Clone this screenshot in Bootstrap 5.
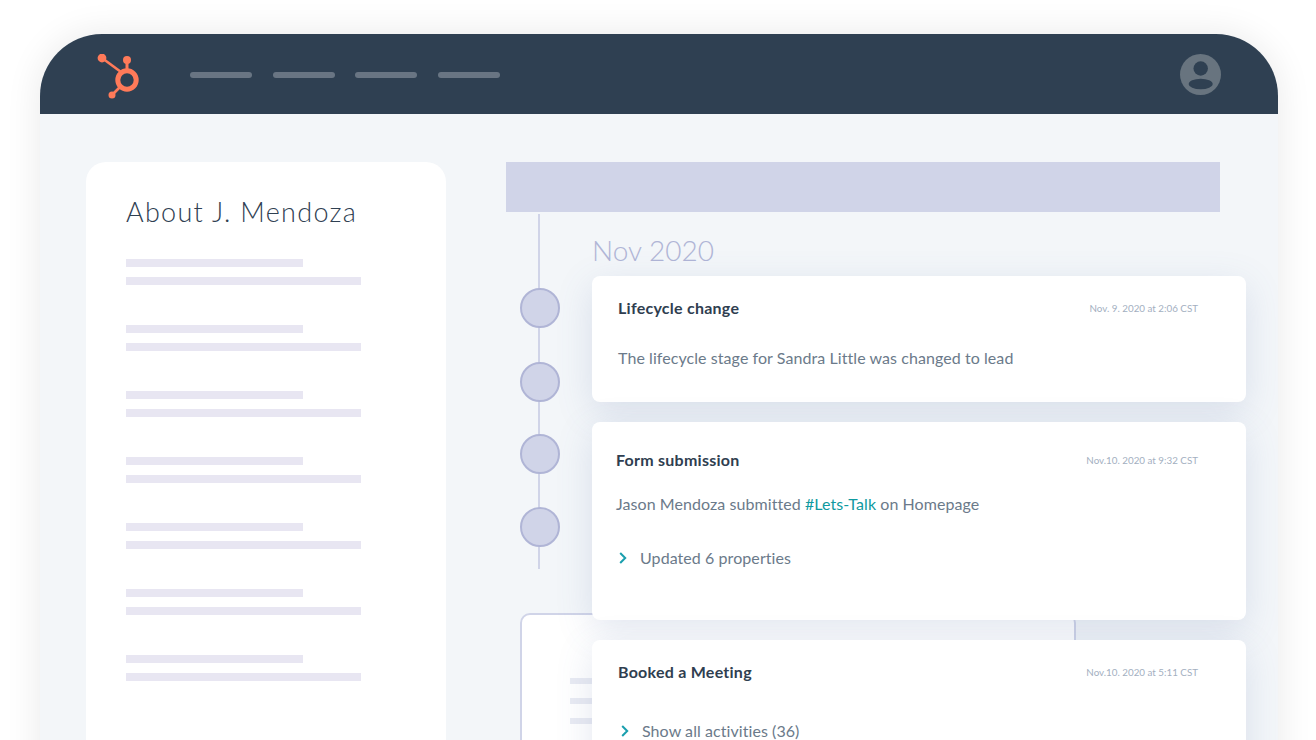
<!DOCTYPE html>
<html lang="en">
<head>
  <meta charset="UTF-8">
  <title>About J. Mendoza</title>
  <meta name="viewport" content="width=device-width, initial-scale=1.0">
  <link rel="stylesheet" href="https://cdn.jsdelivr.net/npm/bootstrap@5.3.0/dist/css/bootstrap.min.css">
  <style>
    html, body {
      height: 740px;
      overflow: hidden;
      background-color: #fff;
      font-family: "Lato", "Liberation Sans", sans-serif;
    }
    .app-window {
      margin: 34px 38px 0 40px;
      height: 780px;
      border-radius: 62px 62px 0 0;
      background-color: #f3f6f9;
      box-shadow: 0 0 36px rgba(0,0,0,.09);
      overflow: hidden;
    }
    .top-bar {
      height: 80px;
      padding: 0 57px 0 56px;
      background-color: #2f4052;
    }
    .top-logo { width: 46px; height: 48px; margin-right: 48px; margin-top: 8px; }
    .top-link {
      width: 62px;
      height: 6px;
      margin-top: 2px;
      margin-right: 20.5px;
      border-radius: 3px;
      background-color: #697583;
    }
    .top-avatar { width: 41px; height: 41px; margin-left: auto; }
    .page-body { padding: 48px 0 0 46px; }
    .about-panel {
      width: 360px;
      height: 640px;
      padding: 33px 40px;
      flex-shrink: 0;
      background-color: #fff;
      border-radius: 20px 20px 0 0;
    }
    .about-title {
      margin: 0 0 30px;
      font-size: 27px;
      font-weight: 300;
      line-height: 34px;
      letter-spacing: 1.3px;
      color: #2f4052;
    }
    .ph-group { margin-bottom: 40px; }
    .ph-line { height: 8px; background-color: #e8e6f2; }
    .ph-short { width: 177px; margin-bottom: 10px; }
    .ph-long { width: 235px; }
    .right-side { position: relative; width: 714px; margin-left: 60px; }
    .top-banner { height: 50px; background-color: #d0d4e8; }
    .rail {
      position: relative;
      width: 40px;
      height: 355px;
      margin: 2px 32px 0 14px;
      padding-top: 74px;
      flex-shrink: 0;
    }
    .rail::before {
      content: "";
      position: absolute;
      top: 0;
      bottom: 0;
      left: 18px;
      width: 2px;
      background-color: #d0d4e8;
    }
    .rail-dot {
      position: relative;
      width: 40px;
      height: 40px;
      border: 2px solid #b0b5d6;
      border-radius: 50%;
      background-color: #d0d4e8;
    }
    .rail-dot:nth-child(2) { margin-top: 34px; }
    .rail-dot:nth-child(3) { margin-top: 32px; }
    .rail-dot:nth-child(4) { margin-top: 33px; }
    .back-doc {
      position: absolute;
      top: 451px;
      left: 14px;
      width: 556px;
      height: 300px;
      padding: 63px 48px;
      border: 2px solid #d0d4e8;
      border-radius: 10px;
      background-color: #fff;
    }
    .back-doc span { display: block; width: 200px; height: 6px; margin-bottom: 14px; background-color: #e9ebf3; }
    .feed { position: relative; width: 654px; flex-shrink: 0; }
    .feed-month {
      height: 64px;
      padding-top: 20px;
      font-size: 28px;
      font-weight: 300;
      line-height: 36px;
      color: #b0b5d6;
    }
    .feed-card {
      margin-bottom: 20px;
      border: 0;
      border-radius: 8px;
      box-shadow: 0 10px 36px rgba(90,110,165,.17);
    }
    .feed-card-a { height: 126px; padding: 21px 48px 0 26px; }
    .feed-card-b { height: 198px; padding: 27px 48px 0 24px; }
    .feed-card-c { height: 200px; padding: 21px 48px 0 26px; }
    .feed-head {
      font-size: 16px;
      font-weight: 700;
      line-height: 22px;
      letter-spacing: .25px;
      color: #2f3e50;
    }
    .feed-time { font-size: 9.8px; color: #a3afbf; }
    .feed-text { margin: 0; font-size: 16px; line-height: 22px; letter-spacing: .07px; color: #6b7a8a; }
    .feed-tag { color: #0f9aa0; }
    .feed-toggle { width: 8px; height: 12px; margin-right: 13px; margin-left: 3px; }
    .gap-a { margin-bottom: 28px; }
    .gap-b { margin-bottom: 22px; }
    .gap-c { margin-bottom: 32px; }
    .gap-d { margin-bottom: 37px; }
  </style>
</head>
<body>
  <div class="app-window">
    <header class="top-bar d-flex align-items-center">
      <svg class="top-logo" viewBox="0 0 46 48">
        <g fill="none" stroke="#ff7a59">
          <circle cx="31" cy="26" r="9.2" stroke-width="5" />
          <path d="M6 4 25 18" stroke-width="2.6" />
          <path d="M31 6V16" stroke-width="3" />
          <path d="M16 41 24 33" stroke-width="2.6" />
        </g>
        <circle cx="6" cy="4" r="4.4" fill="#ff7a59" />
        <circle cx="31" cy="6" r="4" fill="#ff7a59" />
        <circle cx="16" cy="41" r="3.5" fill="#ff7a59" />
      </svg>
      <div class="top-link"></div>
      <div class="top-link"></div>
      <div class="top-link"></div>
      <div class="top-link"></div>
      <svg class="top-avatar" viewBox="0 0 41 41">
        <circle cx="20.5" cy="20.5" r="20.5" fill="#68747f" />
        <circle cx="20.7" cy="14.5" r="7.2" fill="#2f4052" />
        <ellipse cx="20.7" cy="30" rx="12" ry="5.2" fill="#2f4052" />
      </svg>
    </header>

    <div class="page-body d-flex">
      <aside class="about-panel">
        <h2 class="about-title">About J. Mendoza</h2>
        <div class="ph-group"><div class="ph-line ph-short"></div><div class="ph-line ph-long"></div></div>
        <div class="ph-group"><div class="ph-line ph-short"></div><div class="ph-line ph-long"></div></div>
        <div class="ph-group"><div class="ph-line ph-short"></div><div class="ph-line ph-long"></div></div>
        <div class="ph-group"><div class="ph-line ph-short"></div><div class="ph-line ph-long"></div></div>
        <div class="ph-group"><div class="ph-line ph-short"></div><div class="ph-line ph-long"></div></div>
        <div class="ph-group"><div class="ph-line ph-short"></div><div class="ph-line ph-long"></div></div>
        <div class="ph-group"><div class="ph-line ph-short"></div><div class="ph-line ph-long"></div></div>
      </aside>

      <section class="right-side">
        <div class="top-banner"></div>
        <div class="back-doc"><span></span><span></span><span></span></div>
        <div class="d-flex">
          <div class="rail">
            <div class="rail-dot"></div>
            <div class="rail-dot"></div>
            <div class="rail-dot"></div>
            <div class="rail-dot"></div>
          </div>
          <div class="feed">
            <div class="feed-month">Nov 2020</div>

            <div class="card feed-card feed-card-a">
              <div class="d-flex justify-content-between align-items-center gap-a">
                <div class="feed-head">Lifecycle change</div>
                <div class="feed-time">Nov. 9. 2020 at 2:06 CST</div>
              </div>
              <p class="feed-text">The lifecycle stage for Sandra Little was changed to lead</p>
            </div>

            <div class="card feed-card feed-card-b">
              <div class="d-flex justify-content-between align-items-center gap-b">
                <div class="feed-head">Form submission</div>
                <div class="feed-time">Nov.10. 2020 at 9:32 CST</div>
              </div>
              <p class="feed-text gap-c">Jason Mendoza submitted <span class="feed-tag">#Lets-Talk</span> on Homepage</p>
              <div class="d-flex align-items-center">
                <svg class="feed-toggle" viewBox="0 0 8 12"><path d="M1.2 1 6.2 6 1.2 11" fill="none" stroke="#1a9fae" stroke-width="2" /></svg>
                <p class="feed-text">Updated 6 properties</p>
              </div>
            </div>

            <div class="card feed-card feed-card-c">
              <div class="d-flex justify-content-between align-items-center gap-d">
                <div class="feed-head">Booked a Meeting</div>
                <div class="feed-time">Nov.10. 2020 at 5:11 CST</div>
              </div>
              <div class="d-flex align-items-center">
                <svg class="feed-toggle" viewBox="0 0 8 12"><path d="M1.2 1 6.2 6 1.2 11" fill="none" stroke="#1a9fae" stroke-width="2" /></svg>
                <p class="feed-text">Show all activities (36)</p>
              </div>
            </div>
          </div>
        </div>
      </section>
    </div>
  </div>
  <script src="https://cdn.jsdelivr.net/npm/bootstrap@5.3.0/dist/js/bootstrap.bundle.min.js"></script>
</body>
</html>
